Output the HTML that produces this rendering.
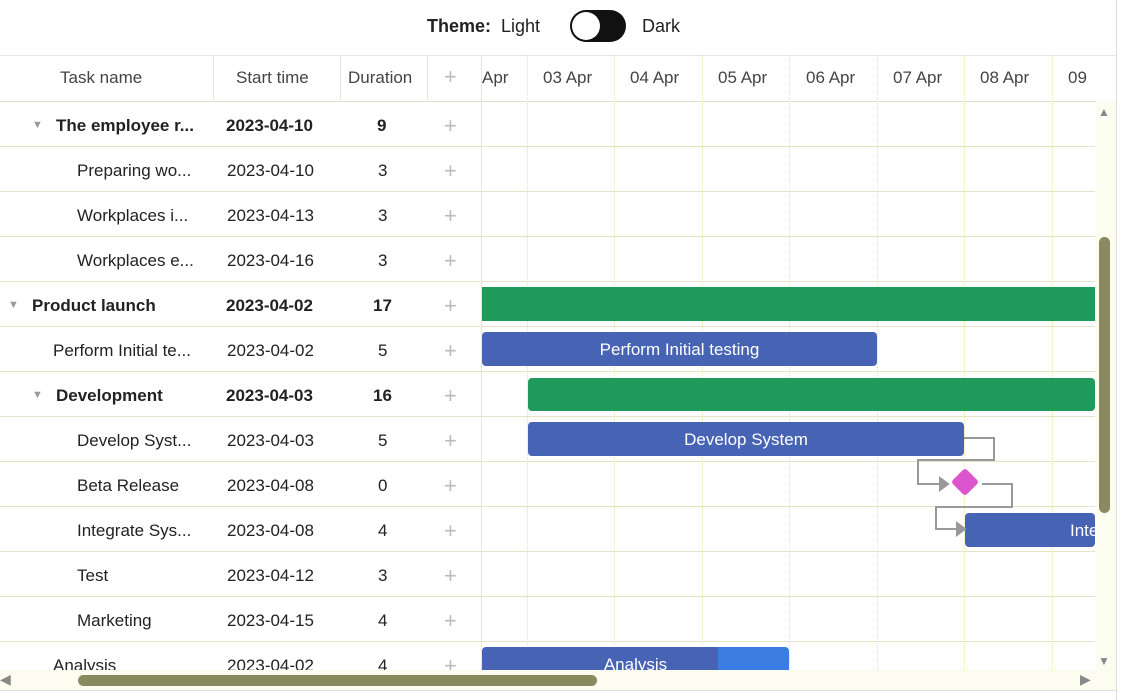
<!DOCTYPE html><html><head><style>
body{margin:0;width:1124px;height:700px;overflow:hidden;background:#fff;font-family:"Liberation Sans",sans-serif;color:#222;position:relative}
.a{position:absolute}
.hdr{font-size:17px;color:#444}
.row{position:absolute;left:0;width:1095px;height:45px;border-bottom:1px solid #e4e4c8;font-size:17px}
.row div{position:absolute;top:2px;line-height:45px}
.b{font-weight:bold}
.plus{color:#bbb;font-size:22px;left:444px}
.bar{position:absolute;border-radius:4px;color:#fff;font-size:17px;text-align:center}
.vl{position:absolute;top:55px;height:615px;border-left:1px dotted #eee7a0}
</style></head><body>
<div class="a" style="left:427px;top:16px;font-size:18px"><b>Theme:</b>&nbsp;&nbsp;Light</div>
<div class="a" style="left:570px;top:10px;width:56px;height:32px;border-radius:16px;background:#111"></div>
<div class="a" style="left:572px;top:12px;width:28px;height:28px;border-radius:14px;background:#fff"></div>
<div class="a" style="left:642px;top:16px;font-size:18px">Dark</div>
<div class="a" style="left:0;top:55px;width:1116px;height:45px;border-top:1px solid #e6e6ee;border-bottom:1px solid #dcdcc8"></div>
<div class="a hdr" style="left:60px;top:68px">Task name</div>
<div class="a hdr" style="left:236px;top:68px">Start time</div>
<div class="a hdr" style="left:348px;top:68px">Duration</div>
<div class="a" style="left:444px;top:64px;font-size:22px;color:#bbb">+</div>
<div class="a" style="left:213px;top:56px;height:44px;border-left:1px solid #e6e6d8"></div>
<div class="a" style="left:340px;top:56px;height:44px;border-left:1px solid #e6e6d8"></div>
<div class="a" style="left:427px;top:56px;height:44px;border-left:1px solid #e6e6d8"></div>
<div class="a" style="left:481px;top:56px;height:614px;border-left:1px solid #e6e6d8"></div>
<div class="a hdr" style="left:482px;top:68px">Apr</div>
<div class="a hdr" style="left:543px;top:68px">03 Apr</div>
<div class="a hdr" style="left:630px;top:68px">04 Apr</div>
<div class="a hdr" style="left:718px;top:68px">05 Apr</div>
<div class="a hdr" style="left:806px;top:68px">06 Apr</div>
<div class="a hdr" style="left:893px;top:68px">07 Apr</div>
<div class="a hdr" style="left:980px;top:68px">08 Apr</div>
<div class="a hdr" style="left:1068px;top:68px">09</div>
<div class="vl" style="left:527px"></div><div class="vl" style="left:614px"></div><div class="vl" style="left:702px"></div><div class="vl" style="left:789px"></div><div class="vl" style="left:877px"></div><div class="vl" style="left:964px"></div><div class="vl" style="left:1052px"></div>

<div class="row" style="top:101px"><div class="b" style="left:32px;color:#999;font-size:11px">▼</div><div class="b" style="left:56px">The employee r...</div><div class="b" style="left:226px">2023-04-10</div><div class="b" style="left:377px">9</div><div class="plus">+</div></div>
<div class="row" style="top:146px"><div style="left:77px">Preparing wo...</div><div style="left:227px">2023-04-10</div><div style="left:378px">3</div><div class="plus">+</div></div>
<div class="row" style="top:191px"><div style="left:77px">Workplaces i...</div><div style="left:227px">2023-04-13</div><div style="left:378px">3</div><div class="plus">+</div></div>
<div class="row" style="top:236px"><div style="left:77px">Workplaces e...</div><div style="left:227px">2023-04-16</div><div style="left:378px">3</div><div class="plus">+</div></div>
<div class="row" style="top:281px"><div class="b" style="left:8px;color:#999;font-size:11px">▼</div><div class="b" style="left:32px">Product launch</div><div class="b" style="left:226px">2023-04-02</div><div class="b" style="left:373px">17</div><div class="plus">+</div></div>
<div class="row" style="top:326px"><div style="left:53px">Perform Initial te...</div><div style="left:227px">2023-04-02</div><div style="left:378px">5</div><div class="plus">+</div></div>
<div class="row" style="top:371px"><div class="b" style="left:32px;color:#999;font-size:11px">▼</div><div class="b" style="left:56px">Development</div><div class="b" style="left:226px">2023-04-03</div><div class="b" style="left:373px">16</div><div class="plus">+</div></div>
<div class="row" style="top:416px"><div style="left:77px">Develop Syst...</div><div style="left:227px">2023-04-03</div><div style="left:378px">5</div><div class="plus">+</div></div>
<div class="row" style="top:461px"><div style="left:77px">Beta Release</div><div style="left:227px">2023-04-08</div><div style="left:378px">0</div><div class="plus">+</div></div>
<div class="row" style="top:506px"><div style="left:77px">Integrate Sys...</div><div style="left:227px">2023-04-08</div><div style="left:378px">4</div><div class="plus">+</div></div>
<div class="row" style="top:551px"><div style="left:77px">Test</div><div style="left:227px">2023-04-12</div><div style="left:378px">3</div><div class="plus">+</div></div>
<div class="row" style="top:596px"><div style="left:77px">Marketing</div><div style="left:227px">2023-04-15</div><div style="left:378px">4</div><div class="plus">+</div></div>
<div class="row" style="top:641px;border:none"><div style="left:53px">Analysis</div><div style="left:227px">2023-04-02</div><div style="left:378px">4</div><div class="plus">+</div></div>

<div class="bar" style="left:482px;top:287px;width:613px;height:34px;background:#1f9a5a;border-radius:0"></div>
<div class="bar" style="left:482px;top:332px;width:395px;height:34px;line-height:36px;background:#4763b4">Perform Initial testing</div>
<div class="bar" style="left:528px;top:378px;width:567px;height:33px;background:#1f9a5a"></div>
<div class="bar" style="left:528px;top:422px;width:436px;height:34px;line-height:36px;background:#4763b4">Develop System</div>
<div class="bar" style="left:965px;top:513px;width:130px;height:34px;line-height:36px;background:#4763b4;text-align:left;padding-left:105px;box-sizing:border-box;overflow:hidden">Integrate</div>
<div class="bar" style="left:482px;top:647px;width:307px;height:23px;line-height:36px;background:linear-gradient(90deg,#4763b4 236px,#3b7de3 236px);border-radius:4px 4px 0 0;overflow:hidden">Analysis</div>
<svg class="a" style="left:900px;top:430px" width="130" height="110" fill="none" stroke="#999" stroke-width="2">
<path d="M64 8H94V30H18V54H40"/><path d="M40 48L48 54L40 60Z" fill="#999"/>
<path d="M82 54H112V77H36V99H57"/><path d="M57 93L65 99L57 105Z" fill="#999"/>
<rect x="55" y="42" width="20" height="20" rx="3" fill="#dd55cc" stroke="none" transform="rotate(45 65 52)"/>
</svg>
<div class="a" style="left:1096px;top:101px;width:20px;height:570px;background:#fcfcf0"></div>
<div class="a" style="left:1099px;top:237px;width:11px;height:276px;border-radius:6px;background:#8a8a60"></div>
<div class="a" style="left:1098px;top:105px;font-size:12px;color:#888">▲</div>
<div class="a" style="left:1098px;top:654px;font-size:12px;color:#888">▼</div>
<div class="a" style="left:0;top:670px;width:1116px;height:20px;background:#fcfcf0;border-bottom:1px solid #ddd"></div>
<div class="a" style="left:78px;top:675px;width:519px;height:11px;border-radius:6px;background:#8a8a60"></div>
<div class="a" style="left:0;top:671px;font-size:14px;color:#888">◀</div>
<div class="a" style="left:1080px;top:671px;font-size:14px;color:#888">▶</div>
<div class="a" style="left:1116px;top:0;height:700px;border-left:1px solid #ddd"></div>
</body></html>
